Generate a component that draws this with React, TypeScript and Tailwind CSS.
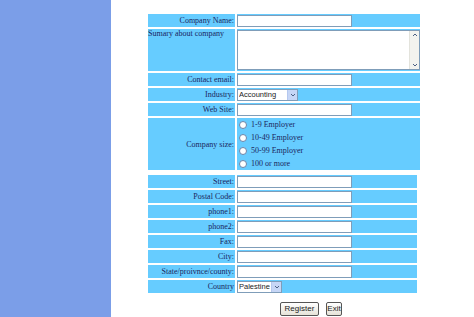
import React from "react";

const td = "bg-[#66ccff] p-0 h-[13px] align-middle";
const lbl = td + " text-right pr-[1px] text-[8px] leading-[13px] text-[#1a2660] whitespace-nowrap";
const inp = "block h-[12px] w-[115px] bg-white border border-[#7f9db9] outline-none";

function Chevron({ up }: { up?: boolean }) {
  return (
    <svg width="6" height="4" viewBox="0 0 6 4">
      <path d={up ? "M1 3 L3 1 L5 3" : "M1 1 L3 3 L5 1"} fill="none" stroke="#4d6185" strokeWidth="1" />
    </svg>
  );
}

function Select({ value, w }: { value: string; w: string }) {
  return (
    <div className={"relative h-[12px] border border-[#7f9db9] bg-white " + w}>
      <select className="appearance-none block h-full w-full bg-white pl-[1px] text-[7.5px] leading-[10px] text-[#222] outline-none" style={{ fontFamily: '"Liberation Sans", Arial, sans-serif' }} defaultValue={value}>
        <option>{value}</option>
      </select>
      <div className="absolute right-0 top-0 h-full w-[10px] bg-[#c6d6f6] border-l border-[#b5c8ef] flex items-center justify-center pointer-events-none">
        <Chevron />
      </div>
    </div>
  );
}

function Radio({ text }: { text: string }) {
  return (
    <div className="flex items-center h-[13px] pl-[2px] gap-[4px]">
      <span className="w-[8px] h-[8px] rounded-full border border-[#6c84a8] bg-white" />
      <span>{text}</span>
    </div>
  );
}

export default function App() {
  const serif = { fontFamily: '"Liberation Serif", "Times New Roman", serif' };
  return (
    <div className="flex min-h-[317px] bg-white" style={serif}>
      <div className="w-[111px] shrink-0 bg-[#7b9ee8]" />
      <div className="flex-1 pl-[35px] pt-[12px]">
        <table className="table-fixed border-separate border-spacing-[2px] w-[276px]" style={serif}>
          <colgroup>
            <col className="w-[87px]" />
            <col className="w-[183px]" />
          </colgroup>
          <tbody>
            <tr>
              <td className={lbl}>Company Name:</td>
              <td className={td}>
                <input className={inp} />
              </td>
            </tr>
            <tr>
              <td className={td + " h-[42px] align-top text-left text-[8px] leading-[10px] text-[#1a2660] whitespace-nowrap"}>Sumary about company</td>
              <td className={td + " h-[42px]"}>
                <div className="flex h-[40px] border border-[#7f9db9] bg-white">
                  <textarea className="flex-1 min-w-0 resize-none outline-none bg-white" />
                  <div className="w-[10px] bg-[#f3f3ef] border-l border-[#e3e3dc] flex flex-col items-center justify-between py-[2px]">
                    <Chevron up />
                    <Chevron />
                  </div>
                </div>
              </td>
            </tr>
            <tr>
              <td className={lbl}>Contact email:</td>
              <td className={td}><input className={inp} /></td>
            </tr>
            <tr>
              <td className={lbl}>Industry:</td>
              <td className={td}><Select value="Accounting" w="w-[61px]" /></td>
            </tr>
            <tr>
              <td className={lbl}>Web Site:</td>
              <td className={td}><input className={inp} /></td>
            </tr>
            <tr>
              <td className={lbl + " h-[52px]"}>Company size:</td>
              <td className={td + " h-[52px] text-[8px] text-[#1a2660]"}>
                <Radio text="1-9 Employer" />
                <Radio text="10-49 Employer" />
                <Radio text="50-99 Employer" />
                <Radio text="100 or more" />
              </td>
            </tr>
          </tbody>
        </table>
        <table className="table-fixed border-separate border-spacing-[2px] w-[273px] mt-[1px]" style={serif}>
          <colgroup>
            <col className="w-[87px]" />
            <col className="w-[180px]" />
          </colgroup>
          <tbody>
            {["Street:", "Postal Code:", "phone1:", "phone2:", "Fax:", "City:", "State/proivnce/county:"].map((t) => (
              <tr key={t}>
                <td className={lbl}>{t}</td>
                <td className={td}><input className={inp} /></td>
              </tr>
            ))}
            <tr>
              <td className={lbl}>Country</td>
              <td className={td}><Select value="Palestine" w="w-[45px]" /></td>
            </tr>
          </tbody>
        </table>
        <div className="flex gap-[7px] pl-[134px] mt-[7px]" style={{ fontFamily: '"Liberation Sans", Arial, sans-serif' }}>
          <button className="h-[14px] w-[39px] border border-[#555] rounded-[2px] bg-gradient-to-b from-[#ffffff] to-[#e6e3d8] text-[8px] leading-[12px] text-[#222]">Register</button>
          <button className="h-[14px] w-[16px] border border-[#555] rounded-[2px] bg-gradient-to-b from-[#ffffff] to-[#e6e3d8] text-[8px] leading-[12px] text-[#222]">Exit</button>
        </div>
      </div>
    </div>
  );
}
